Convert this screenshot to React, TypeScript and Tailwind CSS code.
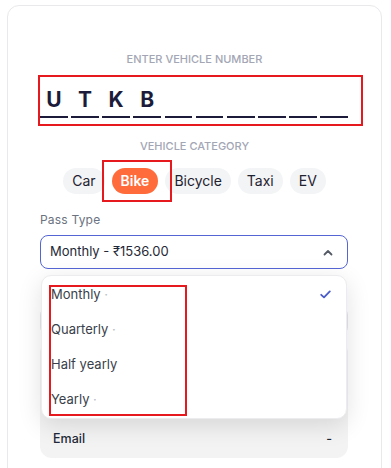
import React from "react";

const letters = ["U", "T", "K", "B", "", "", "", "", "", ""];
const chips = ["Car", "Bike", "Bicycle", "Taxi", "EV"];
const options = [
  { label: "Monthly", dot: true, selected: true },
  { label: "Quarterly", dot: true },
  { label: "Half yearly", dot: false },
  { label: "Yearly", dot: true },
];

export default function App() {
  return (
    <div
      className="relative w-[391px] h-[468px] overflow-hidden bg-white pl-[7px] pt-[5px]"
      style={{ fontFamily: "Inter, 'Noto Sans', sans-serif" }}
    >
      <div className="w-[375px] h-[490px] border border-[#e9e9ec] rounded-[12px] px-[32px] pt-[45px]">
        <div className="text-center text-[11px] leading-[16px] font-medium text-[#a3a6b4]">
          ENTER VEHICLE NUMBER
        </div>
        <div className="mt-[21px] grid grid-cols-10 gap-x-[3.4px] w-[308px]">
          {letters.map((l, i) => (
            <div key={i} className="flex flex-col items-center">
              <div className="h-[24px] leading-[24px] text-[21px] font-bold text-[#1c1c3a]">{l}</div>
              <div className="mt-[4px] h-[2px] w-full bg-[#1c1c3a]" />
            </div>
          ))}
        </div>
        <div className="mt-[20px] text-center text-[11px] leading-[16px] font-medium text-[#a3a6b4]">
          VEHICLE CATEGORY
        </div>
        <div className="mt-[14px] flex justify-center gap-[7px]">
          {chips.map((c) => (
            <div
              key={c}
              className={
                c === "Bike"
                  ? "h-[26px] px-[9px] rounded-full bg-[#ff6b3b] text-white font-semibold text-[14px] leading-[26px]"
                  : "h-[26px] px-[9px] rounded-full bg-[#f3f4f6] text-[#1f2230] text-[14px] leading-[26px]"
              }
            >
              {c}
            </div>
          ))}
        </div>
        <div className="mt-[18px] text-[12px] leading-[16px] text-[#6b7280] tracking-[0.2px]">Pass Type</div>
        <div className="relative mt-[7px]">
          <div className="h-[34px] w-[308px] border border-[#5566d4] rounded-[8px] flex items-center justify-between pl-[9px] pr-[14px]">
            <span className="text-[13px] text-[#1f2937]">Monthly - ₹1536.00</span>
            <svg width="10" height="7" viewBox="0 0 10 7" fill="none">
              <path d="M1.5 5.5 L5 2 L8.5 5.5" stroke="#555b66" strokeWidth="1.8" strokeLinecap="round" strokeLinejoin="round" />
            </svg>
          </div>
          <div className="mt-[38px] h-[28px] w-[308px] border border-[#e5e7eb] rounded-[8px] bg-white" />
          <div className="mt-[6px] w-[308px] h-[117px] rounded-[12px] bg-[#f3f3f4] flex flex-col justify-end px-[13px] pb-[11px]">
            <div className="flex justify-between text-[12.5px] leading-[16px] font-medium text-[#1f2937]">
              <span>Email</span>
              <span className="pr-[3px]">-</span>
            </div>
          </div>
          <div className="absolute left-[1px] top-[40px] w-[306px] bg-white rounded-[10px] border border-[#ececef] shadow-[0_6px_24px_rgba(0,0,0,0.12)] py-[1px]">
            {options.map((o) => (
              <div key={o.label} className="h-[35px] flex items-center justify-between pl-[9px] pr-[15px]">
                <span className="text-[13px] text-[#3a3f4b]">
                  {o.label}
                  {o.dot && <span className="text-[#b8bcc6]"> ·</span>}
                </span>
                {o.selected && (
                  <svg width="11" height="9" viewBox="0 0 11 9" fill="none">
                    <path d="M1.2 4.8 L4 7.4 L9.8 1.4" stroke="#4a5cc9" strokeWidth="1.8" strokeLinecap="round" strokeLinejoin="round" />
                  </svg>
                )}
              </div>
            ))}
          </div>
        </div>
      </div>
      <div className="absolute left-[38px] top-[75px] w-[325px] h-[51px] border-2 border-[#e5191e]" />
      <div className="absolute left-[102px] top-[160px] w-[70px] h-[42px] border-2 border-[#e5191e]" />
      <div className="absolute left-[49px] top-[285px] w-[138px] h-[131px] border-2 border-[#e5191e]" />
    </div>
  );
}
